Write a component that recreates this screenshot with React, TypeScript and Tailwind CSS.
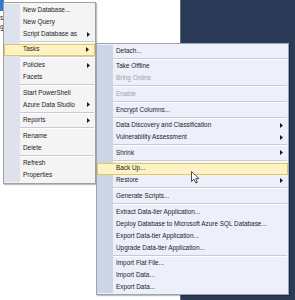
import type React from "react";

type Row =
  | { kind: "sep" }
  | { kind: "item"; label: string; sub?: boolean; disabled?: boolean; active?: boolean };

const sep: Row = { kind: "sep" };
const item = (label: string, opts: Partial<{ sub: boolean; disabled: boolean; active: boolean }> = {}): Row => ({
  kind: "item",
  label,
  ...opts,
});

const mainItems: Row[] = [
  item("New Database..."),
  item("New Query"),
  item("Script Database as", { sub: true }),
  sep,
  item("Tasks", { sub: true, active: true }),
  sep,
  item("Policies", { sub: true }),
  item("Facets"),
  sep,
  item("Start PowerShell"),
  item("Azure Data Studio", { sub: true }),
  sep,
  item("Reports", { sub: true }),
  sep,
  item("Rename"),
  item("Delete"),
  sep,
  item("Refresh"),
  item("Properties"),
];

const taskItems: Row[] = [
  item("Detach..."),
  sep,
  item("Take Offline"),
  item("Bring Online", { disabled: true }),
  sep,
  item("Enable", { disabled: true }),
  sep,
  item("Encrypt Columns..."),
  sep,
  item("Data Discovery and Classification", { sub: true }),
  item("Vulnerability Assessment", { sub: true }),
  sep,
  item("Shrink", { sub: true }),
  sep,
  item("Back Up...", { active: true }),
  item("Restore", { sub: true }),
  sep,
  item("Generate Scripts..."),
  sep,
  item("Extract Data-tier Application..."),
  item("Deploy Database to Microsoft Azure SQL Database..."),
  item("Export Data-tier Application..."),
  item("Upgrade Data-tier Application..."),
  sep,
  item("Import Flat File..."),
  item("Import Data..."),
  item("Export Data..."),
];

const Arrow = () => (
  <svg width="3" height="5" viewBox="0 0 3 5" className="shrink-0">
    <polygon points="0,0 3,2.5 0,5" fill="#1a1a1a" />
  </svg>
);

type MenuProps = {
  items: Row[];
  className: string;
  gutter: string;
  bg: string;
};

const Menu: React.FC<MenuProps> = ({ items, className, gutter, bg }) => (
  <div className={`absolute border py-px flex flex-col shadow-[1px_1px_1px_rgba(0,0,0,0.25)] ${bg} ${className}`}>
    {items.map((row, i) =>
      row.kind === "sep" ? (
        <div key={i} className="flex h-[3.6px]">
          <div className={`w-[16px] ${gutter}`} />
          <div className="flex-1 flex flex-col justify-center pr-[1px]">
            <div className="h-px bg-[#c6cad4]" />
            <div className="h-px bg-white" />
          </div>
        </div>
      ) : (
        <div
          key={i}
          className={`flex h-[12px] items-center ${
            row.active ? "bg-[#fdf3c2] border border-[#e4c56c]" : ""
          }`}
        >
          <div className={`h-full w-[16px] shrink-0 ${row.active ? "" : gutter} ${row.active ? "-ml-px" : ""}`} />
          <span
            className={`flex-1 pl-[3px] whitespace-nowrap leading-none ${
              row.disabled ? "text-[#a2a2a2]" : "text-[#1b1b1b]"
            }`}
          >
            {row.label}
          </span>
          {row.sub && (
            <span className="pr-[5px]">
              <Arrow />
            </span>
          )}
        </div>
      ),
    )}
  </div>
);

const Cursor = () => (
  <svg
    width="10"
    height="13"
    viewBox="0 0 10 13"
    className="absolute left-[191px] top-[171px]"
  >
    <path
      d="M0.5 0.5 L0.5 10.5 L3 8.2 L4.8 12 L6.4 11.3 L4.7 7.6 L8 7.6 Z"
      fill="#ffffff"
      stroke="#3a3a3a"
      strokeWidth="0.9"
      strokeLinejoin="round"
    />
  </svg>
);

export default function App() {
  return (
    <div className="relative w-[295px] h-[300px] overflow-hidden font-['Liberation_Sans',Arial,sans-serif] text-[6.4px]">
      <div className="flex h-full">
        <div className="w-[180px] bg-white flex flex-col pt-0 text-[#222]">
          <div className="h-[11px] w-[4px] bg-[#2f7bd0]" />
          <div className="pl-[0px] pt-[4px] leading-none">s</div>
          <div className="pl-[0px] pt-[3px] leading-none">g</div>
        </div>
        <div className="flex-1 bg-[#2a3a57] border-l border-[#5b6a86]" />
      </div>

      <Menu
        items={mainItems}
        className="left-[3px] top-[2px] w-[93px] border-[#a0a0a0]"
        gutter="bg-[#dde2ec]"
        bg="bg-[#f4f4f4]"
      />
      <Menu
        items={taskItems}
        className="left-[96px] top-[43px] w-[193px] border-[#9aa5b8]"
        gutter="bg-[#cdd4e4]"
        bg="bg-[#edf0fb]"
      />
      <Cursor />
    </div>
  );
}
